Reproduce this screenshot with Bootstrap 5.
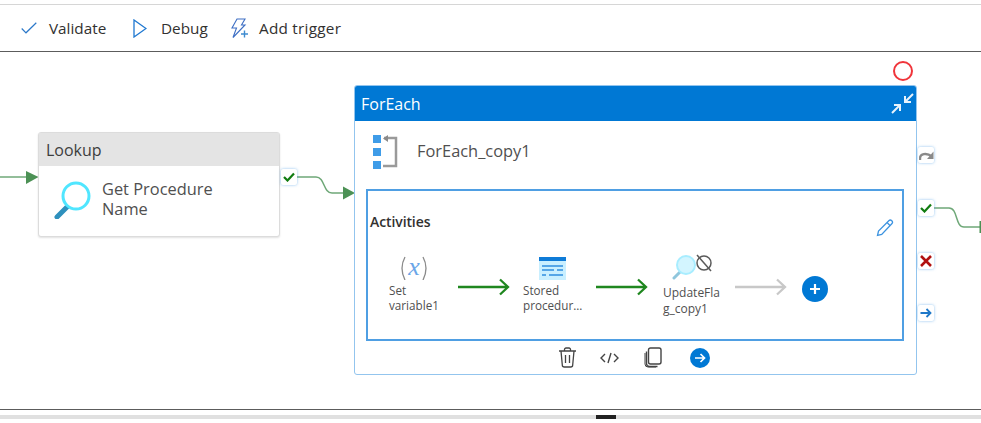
<!DOCTYPE html>
<html lang="en">
<head>
  <meta charset="UTF-8" />
  <meta name="viewport" content="width=device-width, initial-scale=1" />
  <title>Pipeline canvas</title>
  <link href="https://cdn.jsdelivr.net/npm/bootstrap@5.3.3/dist/css/bootstrap.min.css" rel="stylesheet" />
  <style>
    html, body { height: 423px; overflow: hidden; }
    body { font-family: "Open Sans", "Noto Sans", sans-serif; background: #fff; color: #323130; }
    svg { display: block; flex: none; }

    .tool-strip { height: 48px; margin-top: 4px; border-top: 1.5px solid #d6d6d6; border-bottom: 1.5px solid #5c5c5c; padding-left: 21px; font-size: 15.3px; }
    .tool-btn { color: #323130; }
    .tool-validate { width: 112px; gap: 12px; }
    .tool-debug { width: 98px; gap: 14px; }
    .tool-trigger { gap: 10px; letter-spacing: .25px; }

    .pipe-canvas { position: relative; height: 356.5px; }
    .pipe-lines { position: absolute; left: 0; top: 0; }

    .activity-node { position: absolute; border-radius: 3px; background: #fff; }
    .lookup-node { left: 38px; top: 80px; width: 242px; height: 105px; border: 1px solid #dcdcdc; box-shadow: 0 1px 2px rgba(0,0,0,.12); }
    .lookup-head { height: 33px; padding-left: 7px; background: #e4e4e4; font-size: 16px; color: #3d3d3d; }
    .lookup-body { padding: 15px 0 0 15px; gap: 10px; font-size: 16.4px; line-height: 20px; color: #505050; }
    .lookup-label { margin-top: -2px; }

    .foreach-node { left: 354px; top: 33px; width: 563px; height: 290px; border: 1px solid #93c5ee; }
    .foreach-head { height: 35px; padding: 0 2px 0 6px; background: #0078d4; color: #fff; font-size: 16px; border-radius: 2px 2px 0 0; }
    .foreach-title { height: 68px; padding: 0 0 8px 18px; gap: 19px; font-size: 16.4px; color: #505050; }
    .foreach-title svg { margin-top: 1px; }
    .inner-box { height: 152px; margin: 0 12px 0 11px; border: 2px solid #4f9fe3; padding-left: 2px; position: relative; }
    .inner-label { font-size: 14px; font-weight: 600; color: #323130; padding-top: 20px; height: 55px; letter-spacing: -.1px; }
    .inner-edit { position: absolute; right: 8px; top: 28px; }
    .inner-row { padding-left: 19px; }
    .step-item { font-size: 11.7px; line-height: 15px; color: #505050; white-space: nowrap; }
    .step-set { width: 49px; margin-right: 20px; }
    .step-proc { width: 59px; margin-right: 14px; }
    .step-flag { width: 58px; margin-right: 14px; font-size: 12px; line-height: 16px; }
    .step-flag .step-icon { margin-bottom: 5px; }
    .step-icon { height: 34px; margin-bottom: 3px; }
    .step-gap { width: 67px; padding-top: 32px; }
    .step-gap-first { width: 65px; }
    .step-add { margin-top: 30px; }
    .foot-tools { height: 33px; padding-left: 203px; }
    .foot-code { margin-left: 23px; }
    .foot-copy { margin-left: 25px; }
    .foot-next { margin-left: 28px; }

    .port-box { position: absolute; width: 16px; height: 16px; background: #fff; border-radius: 2px; box-shadow: 0 0 3px rgba(80,160,230,.65); }
    .port-lookup { left: 281px; top: 117px; }
    .port-skip { left: 918px; top: 95px; }
    .port-ok { left: 918px; top: 148px; }
    .port-fail { left: 918px; top: 201px; }
    .port-done { left: 918px; top: 253px; }
    .status-ring { position: absolute; left: 893px; top: 9px; width: 20px; height: 20px; border: 2px solid #f0353b; border-radius: 50%; }

    .bottom-rule { height: 6px; border-top: 1.5px solid #5c5c5c; }
    .scroll-track { height: 4px; background: #e0e0e0; }
    .scroll-thumb { width: 20px; height: 4px; margin-left: 596px; background: #222; }
  </style>
</head>
<body>
  <div class="tool-strip d-flex align-items-center">
    <div class="tool-btn tool-validate d-flex align-items-center">
      <svg width="16" height="12" viewBox="0 0 16 12"><path d="M.7 6.5 5 10.8 15.3.7" fill="none" stroke="#2b78c9" stroke-width="1.2"/></svg>
      <span>Validate</span>
    </div>
    <div class="tool-btn tool-debug d-flex align-items-center">
      <svg width="14" height="19" viewBox="0 0 14 19"><path d="M1 1v17l12-8.5z" fill="none" stroke="#1f78d1" stroke-width="1.3"/></svg>
      <span>Debug</span>
    </div>
    <div class="tool-btn tool-trigger d-flex align-items-center">
      <svg width="18" height="21" viewBox="0 0 18 21"><path d="M6 1h8L10.5 7H14L2 19.5 5.5 10H1z" fill="none" stroke="#3e6fc4" stroke-width="1.1"/><path d="M13.5 12.5v7M10 16h7" stroke="#3e8bd0" stroke-width="1.4"/></svg>
      <span>Add trigger</span>
    </div>
  </div>

  <div class="pipe-canvas">
    <svg class="pipe-lines" width="981" height="357" viewBox="0 52 981 357">
      <g fill="none" stroke="#6fa878" stroke-width="1.5">
        <path d="M0 177H27"/>
        <path d="M297 177H316c9 0 7 16 16 16H344"/>
        <path d="M934 208H949c9 0 6 19 15 19H981"/>
      </g>
      <g fill="#4c9155">
        <path d="M26 171 38.5 177 26 184z"/>
        <path d="M343 186.5 355 193 343 199.5z"/>
        <path d="M979.5 221h1.5v12h-1.500z"/>
      </g>
    </svg>

    <div class="status-ring"></div>

    <div class="activity-node lookup-node">
      <div class="lookup-head d-flex align-items-center">Lookup</div>
      <div class="lookup-body d-flex">
        <svg width="38" height="38" viewBox="0 0 38 38"><path d="M3 36 14 25" stroke="#2e90bd" stroke-width="5" stroke-linecap="round"/><circle cx="22" cy="15" r="13" fill="#fff" stroke="#50e6ff" stroke-width="3"/></svg>
        <div class="lookup-label">Get Procedure<br />Name</div>
      </div>
    </div>

    <div class="activity-node foreach-node">
      <div class="foreach-head d-flex align-items-center justify-content-between">
        <span>ForEach</span>
        <svg width="23" height="24" viewBox="0 0 23 24"><g fill="none" stroke="#e8f3fc" stroke-width="2"><path d="M22 2 14 10M14 4v6h6"/><path d="M1 21 9 13M9 19v-6H3"/></g></svg>
      </div>
      <div class="foreach-title d-flex align-items-center">
        <svg width="25" height="34" viewBox="0 0 25 34"><g fill="#3f9ce8"><rect y="0" width="8" height="8"/><rect y="13" width="8" height="8"/><rect y="26" width="8" height="8"/></g><path d="M11 3h12v28H10" fill="none" stroke="#9a9a9a" stroke-width="2.5"/><path d="M15 0 10 3.5 15 7z" fill="#8a8a8a"/></svg>
        <span>ForEach_copy1</span>
      </div>
      <div class="inner-box">
        <div class="inner-label">Activities</div>
        <svg class="inner-edit" width="18" height="18" viewBox="0 0 18 18"><path d="M1.5 16.5 2.5 12 12.8 1.700a2 2 0 0 1 3 3L5.700 15.500zM11 3.500l3.500 3.500" fill="none" stroke="#3c93e0" stroke-width="1.3"/></svg>
        <div class="inner-row d-flex align-items-start">
          <div class="step-item step-set">
            <div class="step-icon d-flex justify-content-center"><svg width="30" height="34" viewBox="0 0 30 34"><path d="M6 11Q0 22 6 34M24 11q6 11 0 23" fill="none" stroke="#8a8a8a" stroke-width="1.3"/><text x="15" y="29" text-anchor="middle" font-family="Liberation Serif, serif" font-style="italic" font-size="26" fill="#6ba6e8">x</text></svg></div>
            Set<br />variable1
          </div>
          <div class="step-gap step-gap-first"><svg width="52" height="18" viewBox="0 0 52 18"><path d="M0 9H50M42 1.5 50 9 42 16.5" fill="none" stroke="#1f871f" stroke-width="2.3"/></svg></div>
          <div class="step-item step-proc">
            <div class="step-icon d-flex justify-content-center align-items-end"><svg width="27" height="23" viewBox="0 0 27 23"><rect width="27" height="23" fill="#c9efff"/><rect width="27" height="4" fill="#0f7bd7"/><path d="M3 9H24M3 13H15M18 13H24M3 18H7M10 18H24" stroke="#2f8fe0" stroke-width="1.5"/></svg></div>
            Stored<br />procedur...
          </div>
          <div class="step-gap"><svg width="52" height="18" viewBox="0 0 52 18"><path d="M0 9H50M42 1.5 50 9 42 16.5" fill="none" stroke="#1f871f" stroke-width="2.3"/></svg></div>
          <div class="step-item step-flag">
            <div class="step-icon d-flex justify-content-center align-items-end"><svg width="42" height="26" viewBox="0 0 42 26"><path d="M3 24 10 17" stroke="#8fc6dc" stroke-width="3" stroke-linecap="round"/><circle cx="15" cy="11" r="9" fill="#d3f5ff" stroke="#a8edff" stroke-width="2"/><circle cx="33" cy="9" r="7" fill="none" stroke="#5a5a5a" stroke-width="1.5"/><path d="M26 1 40 17" stroke="#5a5a5a" stroke-width="1.5"/></svg></div>
            UpdateFla<br />g_copy1
          </div>
          <div class="step-gap"><svg width="52" height="18" viewBox="0 0 52 18"><path d="M0 9H50M42 1.5 50 9 42 16.5" fill="none" stroke="#c8c8c8" stroke-width="2.3"/></svg></div>
          <svg class="step-add" width="26" height="26" viewBox="0 0 26 26"><circle cx="13" cy="13" r="13" fill="#0078d4"/><path d="M13 8v10M8 13h10" stroke="#fff" stroke-width="2.2"/></svg>
        </div>
      </div>
      <div class="foot-tools d-flex align-items-center">
        <svg width="19" height="21" viewBox="0 0 19 21"><path d="M1 4H18M6.5 4V2.5a1.5 1.5 0 0 1 1.500-1.500h3a1.500 1.500 0 0 1 1.500 1.500V4M3 4l1.300 14a2 2 0 0 0 2 2h6.400a2 2 0 0 0 2-2L16 4M7.500 8v8M11.500 8v8" fill="none" stroke="#444" stroke-width="1.3"/></svg>
        <svg class="foot-code" width="19" height="12" viewBox="0 0 19 12"><path d="M5 2 1 6l4 4M14 2l4 4-4 4M11 1 8 11" fill="none" stroke="#444" stroke-width="1.4"/></svg>
        <svg class="foot-copy" width="18" height="21" viewBox="0 0 18 21"><rect x="4.5" y="1" width="12.5" height="16" rx="2" fill="none" stroke="#444" stroke-width="1.4"/><path d="M2.5 4.5v12a3 3 0 0 0 3 3h8" fill="none" stroke="#444" stroke-width="1.4"/><path d="M1 6v11a3 3 0 0 0 3 3h8" fill="none" stroke="#444" stroke-width="1"/></svg>
        <svg class="foot-next" width="20" height="20" viewBox="0 0 20 20"><circle cx="10" cy="10" r="10" fill="#0078d4"/><path d="M5 10H14.5M10.5 6l4 4-4 4" fill="none" stroke="#fff" stroke-width="1.7"/></svg>
      </div>
    </div>

    <div class="port-box port-lookup d-flex align-items-center justify-content-center"><svg width="12" height="10" viewBox="0 0 12 10"><path d="M1 5 4.5 8.500 11 1.500" fill="none" stroke="#107c10" stroke-width="2.2"/></svg></div>
    <div class="port-box port-skip d-flex align-items-center justify-content-center"><svg width="15" height="10" viewBox="0 0 15 10"><path d="M1 10V8.500C1 4 7 2 13 6.500" fill="none" stroke="#8a8a8a" stroke-width="2.4"/><path d="M14.5 1.5V9H8z" fill="#8a8a8a"/></svg></div>
    <div class="port-box port-ok d-flex align-items-center justify-content-center"><svg width="12" height="10" viewBox="0 0 12 10"><path d="M1 5 4.5 8.500 11 1.500" fill="none" stroke="#107c10" stroke-width="2.2"/></svg></div>
    <div class="port-box port-fail d-flex align-items-center justify-content-center"><svg width="12" height="12" viewBox="0 0 12 12"><path d="M1 1 11 11M11 1 1 11" stroke="#b01010" stroke-width="2.6"/></svg></div>
    <div class="port-box port-done d-flex align-items-center justify-content-center"><svg width="12" height="10" viewBox="0 0 12 10"><path d="M.5 5H10.5M6.5 1l4 4-4 4" fill="none" stroke="#1f78c8" stroke-width="1.8"/></svg></div>
  </div>

  <div class="bottom-rule"></div>
  <div class="scroll-track"><div class="scroll-thumb"></div></div>

  <script src="https://cdn.jsdelivr.net/npm/bootstrap@5.3.3/dist/js/bootstrap.bundle.min.js"></script>
</body>
</html>
